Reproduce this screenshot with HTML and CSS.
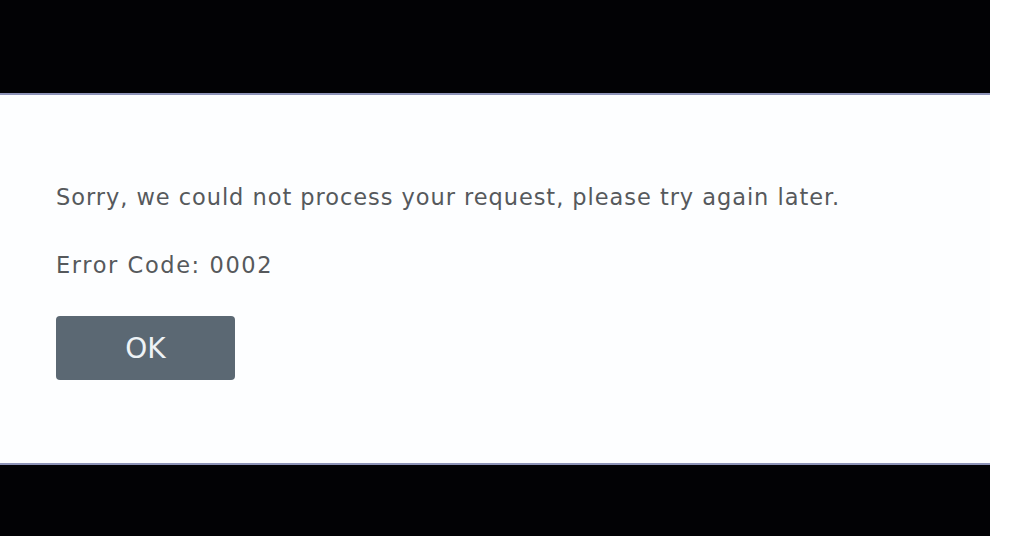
FILE: index.html
```html
<!DOCTYPE html>
<html lang="en">
<head>
    <meta charset="UTF-8">
    <meta name="viewport" content="width=device-width, initial-scale=1.0">
    <title>Error</title>
    <link rel="stylesheet" href="styles.css">
</head>
<body>
    <div class="screen">
        <div class="band band-top"></div>
        <div class="dialog">
            <p class="message">Sorry, we could not process your request, please try again later.</p>
            <p class="code">Error Code: 0002</p>
            <button type="button" class="ok-button">OK</button>
        </div>
        <div class="band band-bottom"></div>
    </div>
</body>
</html>
```
FILE: styles.css
```css
* {
    margin: 0;
    padding: 0;
    box-sizing: border-box;
}

body {
    font-family: 'DejaVu Sans', 'Noto Sans', sans-serif;
    background: #ffffff;
    width: 1024px;
    height: 536px;
    overflow: hidden;
}

.screen {
    width: 990px;
    height: 536px;
    display: flex;
    flex-direction: column;
}

.band {
    background: #020205;
}

.band-top {
    height: 95px;
    border-bottom: 2px solid #8d93b8;
}

.band-bottom {
    flex: 1;
    border-top: 2px solid #8d93b8;
}

.dialog {
    height: 368px;
    background: #fdfeff;
    padding: 87px 0 0 56px;
}

.message {
    font-size: 22.5px;
    color: #56595c;
    line-height: 30px;
    letter-spacing: 0.95px;
}

.code {
    font-size: 22.5px;
    color: #56595c;
    line-height: 30px;
    letter-spacing: 1.6px;
    margin-top: 38px;
}

.ok-button {
    margin-top: 36px;
    width: 179px;
    height: 64px;
    border: none;
    border-radius: 4px;
    background: #5b6873;
    color: #eef3f6;
    font-family: 'DejaVu Sans', 'Noto Sans', sans-serif;
    font-size: 28px;
}
```
